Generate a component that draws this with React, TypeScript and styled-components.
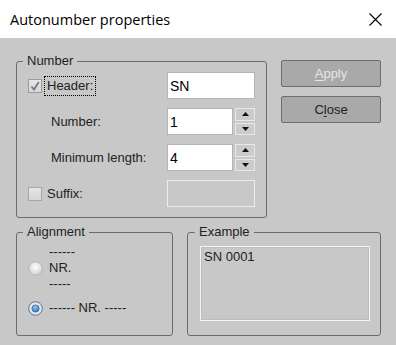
import * as React from 'react';
import styled, { createGlobalStyle } from 'styled-components';

const GlobalStyle = createGlobalStyle`
  html, body {
    margin: 0;
    padding: 0;
    background: #c8c8c8;
  }
  body {
    font-family: "Liberation Sans", Arial, sans-serif;
    font-size: 13px;
    color: #222222;
  }
`;

const Window = styled.div`
  width: 396px;
  height: 345px;
  display: flex;
  flex-direction: column;
  background: #c8c8c8;
  overflow: hidden;
`;

const TitleBar = styled.div`
  height: 38px;
  flex: none;
  background: #ffffff;
  display: flex;
  align-items: center;
  justify-content: space-between;
  padding: 0 14px 0 10px;
  font-family: "Open Sans", "Noto Sans", sans-serif;
  font-size: 14.5px;
  color: #000;
`;

const Body = styled.div`
  display: flex;
  flex-direction: column;
  gap: 6px;
  padding: 15px 15px 0 16px;
`;

const TopRow = styled.div`
  display: flex;
  gap: 14px;
  align-items: flex-start;
`;

const BottomRow = styled.div`
  display: flex;
  gap: 14px;
`;

const Group = styled.fieldset<{ $width?: number; $pad: string }>`
  margin: 0;
  min-width: 0;
  box-sizing: border-box;
  border: 1px solid #6c6c6c;
  border-radius: 3px;
  padding: ${(p) => p.$pad};
  ${(p) => (p.$width ? `width: ${p.$width}px; flex: none;` : 'flex: 1;')}
`;

const Legend = styled.legend`
  margin-left: -5px;
  padding: 0 4px;
  line-height: 16px;
  font-size: 13px;
  color: #222222;
`;

const FormGrid = styled.div`
  display: grid;
  grid-template-columns: 1fr 88px;
  grid-auto-rows: 27px;
  row-gap: 9px;
  align-items: center;
`;

const LabelCell = styled.div<{ $indent?: boolean }>`
  display: flex;
  align-items: center;
  gap: 5px;
  padding-left: ${(p) => (p.$indent ? '23px' : '0')};
  line-height: 16px;
`;

const CheckBox = styled.span<{ $checked?: boolean }>`
  width: 14px;
  height: 14px;
  box-sizing: border-box;
  border: 1px solid ${(p) => (p.$checked ? '#9c9c9c' : '#a6a6a6')};
  background: linear-gradient(#e6e6e6, #d6d6d6);
  display: flex;
  align-items: center;
  justify-content: center;
  flex: none;
`;

const Focus = styled.span`
  outline: 1px dotted #000;
  outline-offset: 1px;
  padding: 0 1px;
  margin-left: -1px;
`;

const TextInput = styled.div<{ $disabled?: boolean; $width?: number }>`
  box-sizing: border-box;
  height: 27px;
  width: ${(p) => (p.$width ? `${p.$width}px` : '100%')};
  background: ${(p) => (p.$disabled ? '#c8c8c8' : '#ffffff')};
  border: 1px solid ${(p) => (p.$disabled ? '#ececec' : '#b4b4b4')};
  padding: 0 2px;
  display: flex;
  align-items: center;
  font-size: 14px;
  color: #000;
`;

const SpinField = styled.div`
  display: flex;
  gap: 2px;
  height: 27px;
`;

const Spin = styled.div`
  width: 20px;
  display: flex;
  flex-direction: column;
  gap: 2px;
`;

const SpinButton = styled.div`
  flex: 1;
  box-sizing: border-box;
  border: 1px solid #e8e8e8;
  background: #cbcbcb;
  display: flex;
  align-items: center;
  justify-content: center;
`;

const ButtonColumn = styled.div`
  width: 100px;
  flex: none;
  display: flex;
  flex-direction: column;
  gap: 9px;
  padding-top: 7px;
`;

const Button = styled.div<{ $disabled?: boolean }>`
  height: 27px;
  box-sizing: border-box;
  border: 1px solid #6e6e6e;
  border-radius: 2px;
  background: #a9a9a9;
  display: flex;
  align-items: center;
  justify-content: center;
  font-size: 13px;
  color: ${(p) => (p.$disabled ? '#e6e6e6' : '#222222')};
  u {
    text-decoration-thickness: 1px;
    text-underline-offset: 2px;
  }
`;

const RadioList = styled.div`
  display: flex;
  flex-direction: column;
  gap: 8px;
`;

const RadioRow = styled.div`
  display: flex;
  align-items: center;
  gap: 6px;
  line-height: 16px;
`;

const RadioText = styled.div`
  display: flex;
  flex-direction: column;
`;

const ExampleBox = styled.div`
  height: 75px;
  box-sizing: border-box;
  border: 1px solid #f4f4f4;
  box-shadow: inset 0 0 0 1px #bdbdbd;
  padding: 2px 3px;
  line-height: 16px;
  font-size: 13px;
  color: #222;
`;

const Arrow = ({ up }: { up?: boolean }) => (
  <svg width="7" height="4" viewBox="0 0 7 4">
    <polygon points={up ? '0,4 7,4 3.5,0' : '0,0 7,0 3.5,4'} fill="#111" />
  </svg>
);

const Radio = ({ checked }: { checked?: boolean }) => (
  <svg width="15" height="15" viewBox="0 0 15 15" style={{ flex: 'none' }}>
    <defs>
      <radialGradient id="off" cx="50%" cy="40%" r="60%">
        <stop offset="0%" stopColor="#ffffff" />
        <stop offset="100%" stopColor="#cfcfcf" />
      </radialGradient>
      <radialGradient id="dot" cx="45%" cy="35%" r="70%">
        <stop offset="0%" stopColor="#9cc8f2" />
        <stop offset="100%" stopColor="#2a68b8" />
      </radialGradient>
    </defs>
    {checked ? (
      <>
        <circle cx="7.5" cy="7.5" r="6.8" fill="#dfe6ee" stroke="#5d7591" strokeWidth="1" />
        <circle cx="7.5" cy="7.5" r="3.6" fill="url(#dot)" stroke="#2f5f9a" strokeWidth="0.6" />
      </>
    ) : (
      <circle cx="7.5" cy="7.5" r="6.8" fill="url(#off)" stroke="#b4b4b4" strokeWidth="1" />
    )}
  </svg>
);

export default function App() {
  return (
    <Window>
      <GlobalStyle />
      <TitleBar>
        <span>Autonumber properties</span>
        <svg width="13" height="13" viewBox="0 0 13 13">
          <path d="M0.5 0.5 L12.5 12.5 M12.5 0.5 L0.5 12.5" stroke="#000" strokeWidth="1.1" />
        </svg>
      </TitleBar>
      <Body>
        <TopRow>
          <Group $width={251} $pad="3px 11px 10px 11px">
            <Legend>Number</Legend>
            <FormGrid>
              <LabelCell>
                <CheckBox $checked>
                  <svg width="10" height="10" viewBox="0 0 10 10">
                    <path d="M1.5 5.5 L4 8.5 L8.8 1" fill="none" stroke="#787878" strokeWidth="1.8" />
                  </svg>
                </CheckBox>
                <Focus>Header:</Focus>
              </LabelCell>
              <TextInput>SN</TextInput>

              <LabelCell $indent>Number:</LabelCell>
              <SpinField>
                <TextInput $width={66}>1</TextInput>
                <Spin>
                  <SpinButton><Arrow up /></SpinButton>
                  <SpinButton><Arrow /></SpinButton>
                </Spin>
              </SpinField>

              <LabelCell $indent>Minimum length:</LabelCell>
              <SpinField>
                <TextInput $width={66}>4</TextInput>
                <Spin>
                  <SpinButton><Arrow up /></SpinButton>
                  <SpinButton><Arrow /></SpinButton>
                </Spin>
              </SpinField>

              <LabelCell>
                <CheckBox />
                <span>Suffix:</span>
              </LabelCell>
              <TextInput $disabled />
            </FormGrid>
          </Group>
          <ButtonColumn>
            <Button $disabled>
              <span><u>A</u>pply</span>
            </Button>
            <Button>
              <span>C<u>l</u>ose</span>
            </Button>
          </ButtonColumn>
        </TopRow>
        <BottomRow>
          <Group $width={157} $pad="4px 11px 19px 11px">
            <Legend>Alignment</Legend>
            <RadioList>
              <RadioRow>
                <Radio />
                <RadioText>
                  <span>------</span>
                  <span>NR.</span>
                  <span>-----</span>
                </RadioText>
              </RadioRow>
              <RadioRow>
                <Radio checked />
                <span>------ NR. -----</span>
              </RadioRow>
            </RadioList>
          </Group>
          <Group $pad="6px 10px 11px 12px">
            <Legend>Example</Legend>
            <ExampleBox>SN 0001</ExampleBox>
          </Group>
        </BottomRow>
      </Body>
    </Window>
  );
}
